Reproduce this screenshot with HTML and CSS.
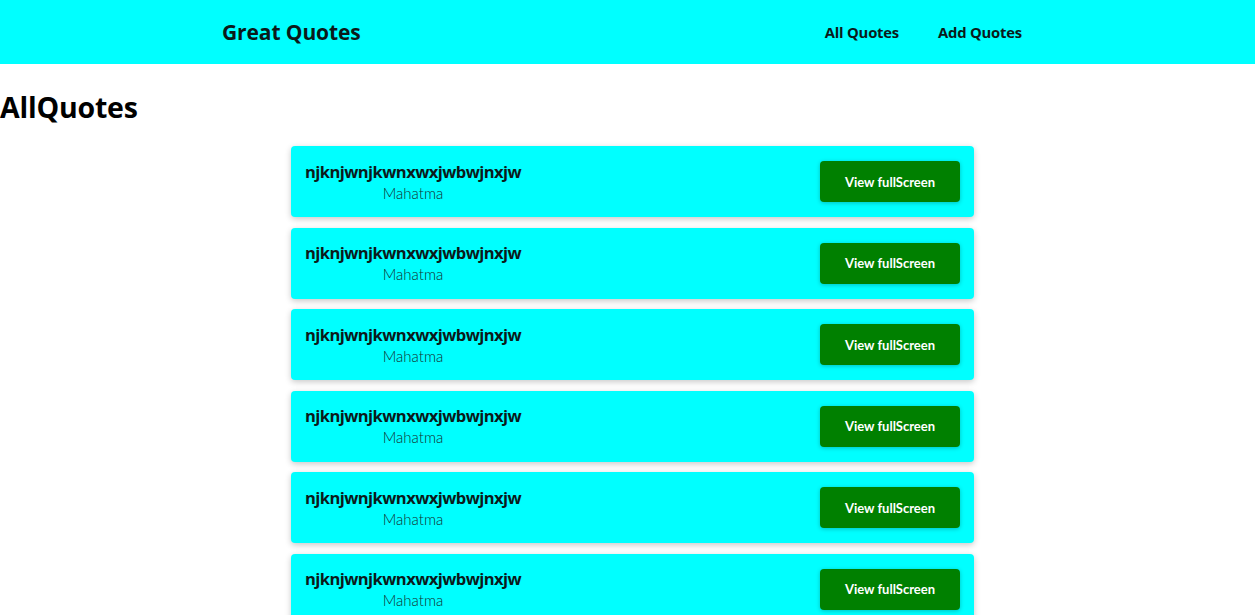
FILE: index.html
```html
<!DOCTYPE html>
<html>
<head>
<meta charset="utf-8">
<link rel="stylesheet" href="styles.css">
</head>
<body>
<header class="header">
  <div class="logo">Great Quotes</div>
  <nav class="nav">
    <a class="nav-link" href="#">All Quotes</a>
    <a class="nav-link" href="#">Add Quotes</a>
  </nav>
</header>
<main>
  <h1 class="page-title">AllQuotes</h1>
  <ul class="quote-list">
    <li class="quote-card">
      <figure class="quote"><blockquote class="quote-text">njknjwnjkwnxwxjwbwjnxjw</blockquote><figcaption class="quote-author">Mahatma</figcaption></figure>
      <a class="btn" href="#">View fullScreen</a>
    </li>
    <li class="quote-card">
      <figure class="quote"><blockquote class="quote-text">njknjwnjkwnxwxjwbwjnxjw</blockquote><figcaption class="quote-author">Mahatma</figcaption></figure>
      <a class="btn" href="#">View fullScreen</a>
    </li>
    <li class="quote-card">
      <figure class="quote"><blockquote class="quote-text">njknjwnjkwnxwxjwbwjnxjw</blockquote><figcaption class="quote-author">Mahatma</figcaption></figure>
      <a class="btn" href="#">View fullScreen</a>
    </li>
    <li class="quote-card">
      <figure class="quote"><blockquote class="quote-text">njknjwnjkwnxwxjwbwjnxjw</blockquote><figcaption class="quote-author">Mahatma</figcaption></figure>
      <a class="btn" href="#">View fullScreen</a>
    </li>
    <li class="quote-card">
      <figure class="quote"><blockquote class="quote-text">njknjwnjkwnxwxjwbwjnxjw</blockquote><figcaption class="quote-author">Mahatma</figcaption></figure>
      <a class="btn" href="#">View fullScreen</a>
    </li>
    <li class="quote-card">
      <figure class="quote"><blockquote class="quote-text">njknjwnjkwnxwxjwbwjnxjw</blockquote><figcaption class="quote-author">Mahatma</figcaption></figure>
      <a class="btn" href="#">View fullScreen</a>
    </li>
  </ul>
</main>
</body>
</html>
```
FILE: styles.css
```css
* { box-sizing: border-box; }
html, body { margin: 0; padding: 0; }
body {
  font-family: "Open Sans", "Noto Sans", sans-serif;
  color: #111;
  background: #fff;
  overflow: hidden;
}
.header {
  height: 64px;
  background: #00ffff;
  display: flex;
  align-items: center;
  justify-content: space-between;
  padding: 0 233px 0 222px;
}
.logo {
  font-size: 21px;
  font-weight: 700;
  color: #0b1a1a;
  letter-spacing: -0.1px;
}
.nav {
  display: flex;
  gap: 39px;
}
.nav-link {
  font-size: 14.8px;
  font-weight: 700;
  color: #0b1a1a;
  text-decoration: none;
  letter-spacing: -0.2px;
}
.page-title {
  margin: 26px 0 22px 0;
  font-size: 28.5px;
  font-weight: 700;
  line-height: 34px;
  letter-spacing: -0.2px;
  color: #000;
}
.quote-list {
  list-style: none;
  margin: 0 auto;
  padding: 0 0 0 10px;
  width: 693px;
  display: flex;
  flex-direction: column;
  gap: 10.5px;
}
.quote-card {
  height: 71px;
  background: #00ffff;
  border-radius: 4px;
  box-shadow: 0 2px 6px rgba(0, 0, 0, 0.22);
  display: flex;
  align-items: center;
  justify-content: space-between;
  padding: 0 14px;
}
.quote {
  margin: 0;
  text-align: center;
}
.quote-text {
  margin: 0;
  font-size: 16.5px;
  font-weight: 700;
  line-height: 22px;
  color: #0b1a1a;
  letter-spacing: -0.55px;
}
.quote-author {
  font-family: "Lato", sans-serif;
  font-weight: 300;
  font-size: 15px;
  line-height: 20px;
  color: #143030;
}
.btn {
  width: 140px;
  height: 41px;
  background: #008000;
  color: #fff;
  border-radius: 4px;
  display: flex;
  align-items: center;
  justify-content: center;
  font-family: "Lato", sans-serif;
  font-weight: 700;
  font-size: 13px;
  text-decoration: none;
  box-shadow: 0 1px 4px rgba(0, 0, 0, 0.25);
}
```
